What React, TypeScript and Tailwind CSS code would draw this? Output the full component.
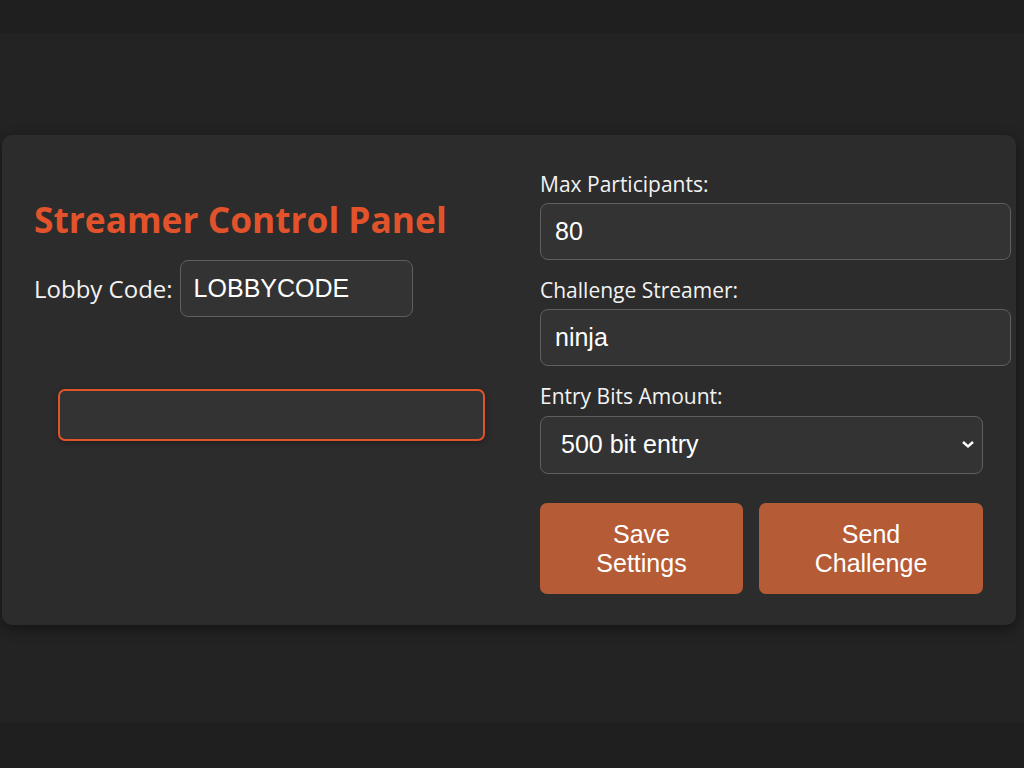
import React from "react";

const labelFont = { fontFamily: '"Open Sans", "Noto Sans", sans-serif' };

function Field({ label, value, className = "" }: { label: string; value: string; className?: string }) {
  return (
    <div className={className}>
      <label className="block text-[21px] leading-[28px] text-[#f2f2f2]">{label}</label>
      <input
        readOnly
        value={value}
        className="mt-[5px] h-[57px] w-[471px] rounded-[8px] border border-[#5f5f5f] bg-[#333333] px-[14px] text-[25px] text-white font-['Liberation_Sans',Arial,sans-serif] outline-none"
      />
    </div>
  );
}

export default function App() {
  return (
    <div className="min-h-[768px] w-[1024px] bg-[#1f1f1f] pt-[33px]" style={labelFont}>
      <div className="h-[690px] bg-[#232323] pt-[102px]">
        {/* Panel card */}
        <div className="ml-[2px] flex h-[490px] w-[1014px] rounded-[10px] bg-[#2c2c2c] shadow-[0_4px_14px_rgba(0,0,0,0.45)]">
          {/* Left column */}
          <div className="w-[538px] shrink-0 pl-[32px] pt-[62px]">
            <h1 className="text-[35.3px] font-bold leading-[44px] text-[#e2532b]">Streamer Control Panel</h1>
            <div className="mt-[19px] flex items-center gap-[7px]">
              <span className="text-[24px] text-[#f2f2f2]">Lobby Code:</span>
              <input
                readOnly
                value="LOBBYCODE"
                className="h-[57px] w-[233px] rounded-[8px] border border-[#5f5f5f] bg-[#333333] px-[13px] text-[25px] text-white font-['Liberation_Sans',Arial,sans-serif] outline-none"
              />
            </div>
            <div className="ml-[24px] mt-[72px] h-[52px] w-[427px] rounded-[7px] border-2 border-[#e0532b] bg-[#333333] shadow-[0_2px_6px_rgba(0,0,0,0.3)]" />
          </div>

          {/* Right column */}
          <div className="flex-1 pt-[35px]">
            <Field label="Max Participants:" value="80" />
            <Field label="Challenge Streamer:" value="ninja" className="mt-[16px]" />
            <div className="mt-[16px]">
              <label className="block text-[21px] leading-[28px] text-[#f2f2f2]">Entry Bits Amount:</label>
              <div className="relative mt-[6px] h-[58px] w-[443px]">
                <select
                  defaultValue="500"
                  className="h-full w-full appearance-none rounded-[8px] border border-[#5f5f5f] bg-[#333333] pl-[20px] text-[25px] text-white font-['Liberation_Sans',Arial,sans-serif] outline-none"
                >
                  <option value="100">100 bit entry</option>
                  <option value="500">500 bit entry</option>
                  <option value="1000">1000 bit entry</option>
                </select>
                <svg
                  className="pointer-events-none absolute right-[8px] top-[23px]"
                  width="14"
                  height="10"
                  viewBox="0 0 14 10"
                  fill="none"
                >
                  <path d="M2 3l5 4.5L12 3" stroke="#ffffff" strokeWidth="2.4" />
                </svg>
              </div>
            </div>
            <div className="mt-[29px] flex gap-[16px]">
              <button className="h-[91px] w-[203px] rounded-[7px] bg-[#b55b36] text-[25px] leading-[29px] text-white font-['Liberation_Sans',Arial,sans-serif]">
                Save
                <br />
                Settings
              </button>
              <button className="h-[91px] w-[224px] rounded-[7px] bg-[#b55b36] text-[25px] leading-[29px] text-white font-['Liberation_Sans',Arial,sans-serif]">
                Send
                <br />
                Challenge
              </button>
            </div>
          </div>
        </div>
      </div>
    </div>
  );
}
